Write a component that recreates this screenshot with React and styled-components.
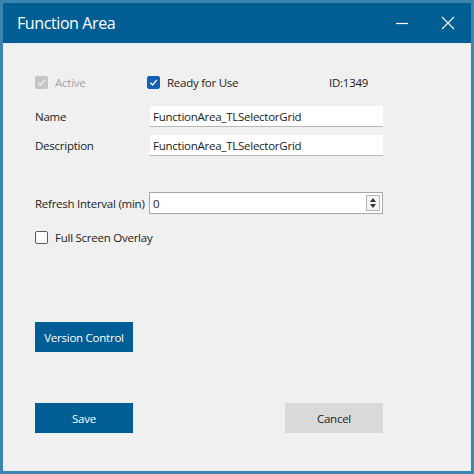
import React from "react"
import styled, { createGlobalStyle } from "styled-components"

const Global = createGlobalStyle`
html, body {
    margin: 0;
    padding: 0;
    background: #3d85ae;
}
* { box-sizing: border-box; }
`

const Window = styled.div`
width: 474px;
height: 474px;
border: 3px solid #3d85ae;
display: flex;
flex-direction: column;
font-family: "Open Sans", "Noto Sans", sans-serif;
font-size: 11.5px;
letter-spacing: -0.25px;
color: #1b1b1b;
white-space: nowrap;
`

const TitleBar = styled.div`
height: 40px;
flex: none;
background: #005e94;
color: #fff;
display: flex;
align-items: center;
padding-left: 14px;
`

const Title = styled.div`
flex: 1;
font-size: 16px;
letter-spacing: -0.4px;
`

const WinButton = styled.div`
width: 46px;
height: 40px;
display: flex;
align-items: center;
justify-content: center;
`

const Body = styled.div`
flex: 1;
background: #f0f0f0;
border: 1px solid #e4eef5;
padding: 28px 87px 0 31px;
display: flex;
flex-direction: column;
`

const TopRow = styled.div`
height: 20px;
display: grid;
grid-template-columns: 112px 182px 1fr;
align-items: center;
`

const CheckLabel = styled.label`
display: flex;
align-items: center;
gap: 7px;
color: ${p => p.$disabled ? "#a3a3a3" : "#1b1b1b"};
`

const Box = styled.span`
width: 13px;
height: 13px;
border-radius: 2px;
display: flex;
align-items: center;
justify-content: center;
background: ${p => p.$checked ? (p.$disabled ? "#c6c6c6" : "#0f62b5") : "#fff"};
border: 1px solid ${p => p.$checked ? (p.$disabled ? "#c6c6c6" : "#0f62b5") : "#5a5a5a"};
`

const IdText = styled.span``

const FieldRow = styled.div`
display: grid;
grid-template-columns: 115px 1fr;
align-items: center;
margin-top: ${p => p.$gap}px;
`

const Label = styled.span``

const TextInput = styled.div`
height: 21px;
background: #fff;
border-bottom: 1px solid #b9b9b9;
padding: 0 3px;
display: flex;
align-items: center;
`

const NumberInput = styled.div`
height: 22px;
background: #fff;
border: 1px solid #a8a8a8;
padding: 0 2px 0 3px;
display: flex;
align-items: center;
margin-left: -1px;
`

const NumberValue = styled.span`
flex: 1;
`

const Spinner = styled.div`
width: 14px;
height: 16px;
border: 1px solid #b5b5b5;
display: flex;
flex-direction: column;
align-items: center;
justify-content: space-around;
padding: 1px 0;
background: #f3f3f3;
`

const CheckRow = styled.div`
height: 20px;
margin-top: 13px;
display: flex;
align-items: center;
`

const Button = styled.button`
width: 98px;
height: 30px;
border: none;
font-family: inherit;
font-size: 11.5px;
letter-spacing: -0.25px;
background: ${p => p.$secondary ? "#d9d9d9" : "#005e94"};
color: ${p => p.$secondary ? "#1b1b1b" : "#fff"};
padding: 0;
`

const VersionWrap = styled.div`
margin-top: 75px;
`

const Footer = styled.div`
margin-top: 51px;
display: flex;
justify-content: space-between;
`

const Check = ({ color = "#fff" }) => (
    <svg width="9" height="9" viewBox="0 0 9 9">
        <path d="M1.2 4.6 L3.6 7 L7.8 2" stroke={color} strokeWidth="1.3" fill="none" />
    </svg>
)

const App = () => {
    return (
        <>
            <Global />
            <Window>
                <TitleBar>
                    <Title>Function Area</Title>
                    <WinButton>
                        <svg width="14" height="14" viewBox="0 0 14 14">
                            <path d="M1 7.5 H13" stroke="#fff" strokeWidth="1.2" />
                        </svg>
                    </WinButton>
                    <WinButton>
                        <svg width="14" height="14" viewBox="0 0 14 14">
                            <path d="M1 1 L13 13 M13 1 L1 13" stroke="#fff" strokeWidth="1.1" />
                        </svg>
                    </WinButton>
                </TitleBar>
                <Body>
                    <TopRow>
                        <CheckLabel $disabled>
                            <Box $checked $disabled><Check color="#f2f2f2" /></Box>
                            Active
                        </CheckLabel>
                        <CheckLabel>
                            <Box $checked><Check /></Box>
                            Ready for Use
                        </CheckLabel>
                        <IdText>ID:1349</IdText>
                    </TopRow>
                    <FieldRow $gap={14}>
                        <Label>Name</Label>
                        <TextInput>FunctionArea_TLSelectorGrid</TextInput>
                    </FieldRow>
                    <FieldRow $gap={8}>
                        <Label>Description</Label>
                        <TextInput>FunctionArea_TLSelectorGrid</TextInput>
                    </FieldRow>
                    <FieldRow $gap={36}>
                        <Label>Refresh Interval (min)</Label>
                        <NumberInput>
                            <NumberValue>0</NumberValue>
                            <Spinner>
                                <svg width="6" height="4" viewBox="0 0 6 4"><path d="M0 4 L3 0 L6 4 Z" fill="#333" /></svg>
                                <svg width="6" height="4" viewBox="0 0 6 4"><path d="M0 0 L3 4 L6 0 Z" fill="#333" /></svg>
                            </Spinner>
                        </NumberInput>
                    </FieldRow>
                    <CheckRow>
                        <CheckLabel>
                            <Box />
                            Full Screen Overlay
                        </CheckLabel>
                    </CheckRow>
                    <VersionWrap>
                        <Button>Version Control</Button>
                    </VersionWrap>
                    <Footer>
                        <Button>Save</Button>
                        <Button $secondary>Cancel</Button>
                    </Footer>
                </Body>
            </Window>
        </>
    )
}

export default App
